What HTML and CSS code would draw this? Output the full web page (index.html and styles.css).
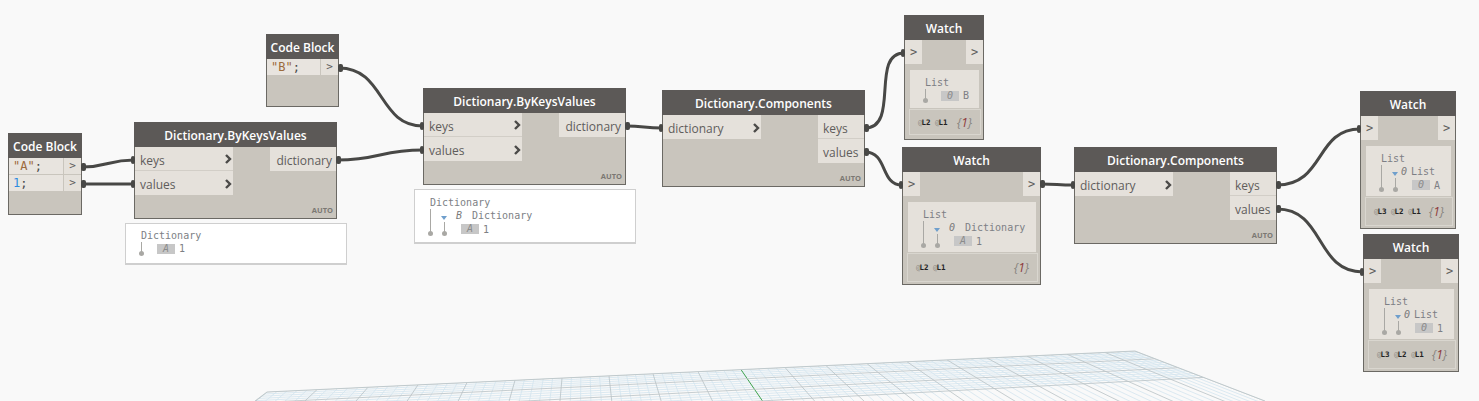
FILE: index.html
```html
<!DOCTYPE html>
<html lang="en">
<head>
    <meta charset="UTF-8">
    <title>Dynamo graph</title>
    <link rel="stylesheet" href="styles.css">
</head>
<body>
<div class="canvas">
    <svg class="grid" id="grid" width="1479" height="401"></svg>

    <!-- code blocks -->
    <div class="node code-a">
        <div class="node-head">Code Block</div>
        <div class="code-row">
            <span class="code-text"><span class="str">"A"</span>;</span>
            <span class="code-port">&gt;</span>
        </div>
        <div class="code-row">
            <span class="code-text"><span class="num">1</span>;</span>
            <span class="code-port">&gt;</span>
        </div>
    </div>

    <div class="node code-b">
        <div class="node-head">Code Block</div>
        <div class="code-row">
            <span class="code-text"><span class="str">"B"</span>;</span>
            <span class="code-port">&gt;</span>
        </div>
    </div>

    <!-- dictionary nodes -->
    <div class="node dict dict-a">
        <div class="node-head">Dictionary.ByKeysValues</div>
        <div class="node-body">
            <div class="ports">
                <div class="in">keys<svg class="chev" viewBox="0 0 8 10"><path d="M2 1l4 4-4 4"/></svg></div>
                <div class="in">values<svg class="chev" viewBox="0 0 8 10"><path d="M2 1l4 4-4 4"/></svg></div>
            </div>
            <div class="ports">
                <div class="out">dictionary</div>
            </div>
        </div>
        <div class="auto">AUTO</div>
    </div>

    <div class="preview prev-a">
        <div class="tree">
            <span class="guide"></span>
            <div class="row">Dictionary</div>
            <div class="row ind16"><span class="chip">A</span>1</div>
        </div>
    </div>

    <div class="node dict dict-b">
        <div class="node-head">Dictionary.ByKeysValues</div>
        <div class="node-body">
            <div class="ports">
                <div class="in">keys<svg class="chev" viewBox="0 0 8 10"><path d="M2 1l4 4-4 4"/></svg></div>
                <div class="in">values<svg class="chev" viewBox="0 0 8 10"><path d="M2 1l4 4-4 4"/></svg></div>
            </div>
            <div class="ports">
                <div class="out">dictionary</div>
            </div>
        </div>
        <div class="auto">AUTO</div>
    </div>

    <div class="preview prev-b">
        <div class="tree">
            <span class="guide long"></span>
            <span class="guide inner"></span>
            <div class="row">Dictionary</div>
            <div class="row ind26"><span class="idx">B</span>Dictionary</div>
            <div class="row ind31"><span class="chip">A</span>1</div>
        </div>
    </div>

    <div class="node dict comp-a">
        <div class="node-head">Dictionary.Components</div>
        <div class="node-body">
            <div class="ports">
                <div class="in">dictionary<svg class="chev" viewBox="0 0 8 10"><path d="M2 1l4 4-4 4"/></svg></div>
            </div>
            <div class="ports">
                <div class="out short">keys</div>
                <div class="out short">values</div>
            </div>
        </div>
        <div class="auto">AUTO</div>
    </div>

    <div class="node dict comp-b">
        <div class="node-head">Dictionary.Components</div>
        <div class="node-body">
            <div class="ports">
                <div class="in">dictionary<svg class="chev" viewBox="0 0 8 10"><path d="M2 1l4 4-4 4"/></svg></div>
            </div>
            <div class="ports">
                <div class="out short">keys</div>
                <div class="out short">values</div>
            </div>
        </div>
        <div class="auto">AUTO</div>
    </div>

    <!-- watch nodes -->
    <div class="node watch watch-a">
        <div class="node-head">Watch</div>
        <div class="watch-ports"><span>&gt;</span><span>&gt;</span></div>
        <div class="watch-view">
            <div class="tree">
                <span class="guide"></span>
                <div class="row">List</div>
                <div class="row ind16"><span class="chip">0</span>B</div>
            </div>
        </div>
        <div class="levels">
            <span><i>@</i><b>L2</b> <i>@</i><b>L1</b></span>
            <span class="count">{<em>1</em>}</span>
        </div>
    </div>

    <div class="node watch watch-b">
        <div class="node-head">Watch</div>
        <div class="watch-ports"><span>&gt;</span><span>&gt;</span></div>
        <div class="watch-view">
            <div class="tree">
                <span class="guide long"></span>
                <span class="guide inner"></span>
                <div class="row">List</div>
                <div class="row ind26"><span class="idx">0</span>Dictionary</div>
                <div class="row ind31"><span class="chip">A</span>1</div>
            </div>
        </div>
        <div class="levels">
            <span><i>@</i><b>L2</b> <i>@</i><b>L1</b></span>
            <span class="count">{<em>1</em>}</span>
        </div>
    </div>

    <div class="node watch watch-c">
        <div class="node-head">Watch</div>
        <div class="watch-ports"><span>&gt;</span><span>&gt;</span></div>
        <div class="watch-view">
            <div class="tree">
                <span class="guide long"></span>
                <span class="guide inner"></span>
                <div class="row">List</div>
                <div class="row ind20"><span class="idx tight">0</span>List</div>
                <div class="row ind31"><span class="chip">0</span>A</div>
            </div>
        </div>
        <div class="levels">
            <span><i>@</i><b>L3</b> <i>@</i><b>L2</b> <i>@</i><b>L1</b></span>
            <span class="count">{<em>1</em>}</span>
        </div>
    </div>

    <div class="node watch watch-d">
        <div class="node-head">Watch</div>
        <div class="watch-ports"><span>&gt;</span><span>&gt;</span></div>
        <div class="watch-view">
            <div class="tree">
                <span class="guide long"></span>
                <span class="guide inner"></span>
                <div class="row">List</div>
                <div class="row ind20"><span class="idx tight">0</span>List</div>
                <div class="row ind31"><span class="chip">0</span>1</div>
            </div>
        </div>
        <div class="levels">
            <span><i>@</i><b>L3</b> <i>@</i><b>L2</b> <i>@</i><b>L1</b></span>
            <span class="count">{<em>1</em>}</span>
        </div>
    </div>

    <!-- connectors -->
    <svg class="wires" width="1479" height="401">
        <g class="wire">
            <path d="M82 167C108 167 108 160 134 160"/>
            <path d="M82 184H134"/>
            <path d="M339 68C385 68 378 126 423 126"/>
            <path d="M337 160C380 160 380 150 423 150"/>
            <path d="M626 126C644 126 644 128 662 128"/>
            <path d="M865 128C900 128 870 53 904 53"/>
            <path d="M865 152C888 152 880 185 902 185"/>
            <path d="M1041 184C1057 184 1057 185 1074 185"/>
            <path d="M1277 185C1325 185 1315 129 1360 129"/>
            <path d="M1277 209C1325 209 1315 272 1363 272"/>
        </g>
        <g class="nub">
            <rect x="81" y="163" width="5" height="8" rx="2"/>
            <rect x="81" y="180" width="5" height="8" rx="2"/>
            <rect x="131" y="156" width="4" height="8" rx="2"/>
            <rect x="131" y="180" width="4" height="8" rx="2"/>
            <rect x="338" y="64" width="5" height="8" rx="2"/>
            <rect x="336" y="156" width="5" height="8" rx="2"/>
            <rect x="420" y="122" width="4" height="8" rx="2"/>
            <rect x="420" y="146" width="4" height="8" rx="2"/>
            <rect x="625" y="122" width="5" height="8" rx="2"/>
            <rect x="659" y="124" width="4" height="8" rx="2"/>
            <rect x="864" y="124" width="5" height="8" rx="2"/>
            <rect x="864" y="148" width="5" height="8" rx="2"/>
            <rect x="901" y="49" width="4" height="8" rx="2"/>
            <rect x="899" y="181" width="4" height="8" rx="2"/>
            <rect x="1040" y="180" width="5" height="8" rx="2"/>
            <rect x="1071" y="181" width="4" height="8" rx="2"/>
            <rect x="1276" y="181" width="5" height="8" rx="2"/>
            <rect x="1276" y="205" width="5" height="8" rx="2"/>
            <rect x="1357" y="125" width="4" height="8" rx="2"/>
            <rect x="1360" y="268" width="4" height="8" rx="2"/>
        </g>
    </svg>
</div>
<script src="grid.js"></script>
</body>
</html>
```

FILE: styles.css
```css
:root {
    --bg: #f9f9f9;
    --head: #5c5957;
    --body: #c9c5bd;
    --edge: #6b6964;
    --row: #e5e1db;
    --text: #5f5d5b;
    --mono: 'DejaVu Sans Mono', monospace;
}

* {
    box-sizing: border-box;
}

body {
    margin: 0;
    background-color: var(--bg);
    overflow: hidden;
}

.canvas {
    position: relative;
    width: 1479px;
    height: 401px;
    font-family: 'Open Sans', sans-serif;
    color: var(--text);
}

.grid, .wires {
    position: absolute;
    left: 0;
    top: 0;
}

.wires {
    pointer-events: none;
}

.wire path {
    fill: none;
    stroke: #484846;
    stroke-width: 3;
}

.nub rect {
    fill: #484846;
}

/* nodes */
.node {
    position: absolute;
    display: flex;
    flex-direction: column;
    background-color: var(--body);
    border: 1px solid var(--edge);
}

.node-head {
    flex: none;
    height: 23px;
    margin: -1px -1px 0;
    padding-top: 2px;
    box-sizing: content-box;
    background-color: var(--head);
    color: #fff;
    font-size: 12px;
    font-weight: 600;
    line-height: 24px;
    text-align: center;
}

.code-a { left: 8px; top: 133px; width: 74px; height: 82px; }
.code-b { left: 266px; top: 34px; width: 73px; height: 73px; }
.dict-a { left: 134px; top: 122px; width: 203px; height: 97px; }
.dict-b { left: 423px; top: 88px; width: 203px; height: 97px; }
.comp-a { left: 662px; top: 90px; width: 203px; height: 97px; }
.comp-b { left: 1074px; top: 147px; width: 203px; height: 97px; }
.watch-a { left: 904px; top: 15px; width: 80px; height: 125px; }
.watch-b { left: 902px; top: 147px; width: 139px; height: 138px; }
.watch-c { left: 1360px; top: 91px; width: 96px; height: 138px; }
.watch-d { left: 1363px; top: 234px; width: 96px; height: 138px; }

/* code block rows */
.code-row {
    display: flex;
    height: 17px;
    border-bottom: 1px solid var(--body);
}

.code-text {
    flex: 1;
    padding-left: 4px;
    background-color: #e8e4df;
    color: #4a4a4a;
    font-family: var(--mono);
    font-size: 12px;
    line-height: 16px;
}

.str { color: #9c6a3c; }
.num { color: #2f8be0; }

.code-port {
    flex: none;
    width: 17px;
    margin-left: 1px;
    background-color: var(--row);
    font-family: var(--mono);
    font-size: 11px;
    line-height: 16px;
    text-align: center;
}

/* dictionary node rows */
.node-body {
    display: flex;
    justify-content: space-between;
}

.ports {
    display: flex;
    flex-direction: column;
    align-items: flex-end;
}

.in, .out {
    height: 24px;
    border-bottom: 1px solid #d2cec7;
    background-color: var(--row);
    font-size: 12px;
    line-height: 28px;
}

.in:last-child, .out:last-child {
    border-bottom: 0;
}

.in {
    display: flex;
    justify-content: space-between;
    align-items: center;
    width: 98px;
    padding: 4px 1px 0 5px;
}

.out {
    width: 66px;
    padding-right: 4px;
    text-align: right;
}

.out.short {
    width: 46px;
    padding-right: 0;
    padding-left: 5px;
    text-align: left;
}

.chev {
    width: 8px;
    height: 10px;
    margin-top: -3px;
}

.chev path {
    fill: none;
    stroke: #4b4a48;
    stroke-width: 2.4;
}

.auto {
    margin-top: auto;
    padding: 0 3px 3px 0;
    color: #7b7873;
    font-size: 7.5px;
    font-weight: 700;
    line-height: 10px;
    text-align: right;
}

/* previews */
.preview {
    position: absolute;
    background-color: #fff;
    border: 1px solid #cfcfcf;
    border-bottom-width: 2px;
}

.prev-a { left: 125px; top: 223px; width: 222px; height: 42px; padding: 5px 0 0 15px; }
.prev-b { left: 414px; top: 189px; width: 222px; height: 55px; padding: 6px 0 0 15px; }

.tree {
    position: relative;
    font-family: var(--mono);
    font-size: 10px;
    color: #7d7f85;
}

.row {
    display: flex;
    align-items: center;
    height: 13.3px;
    white-space: pre;
}

.ind16 { margin-left: 16px; }
.ind20 { margin-left: 20px; }
.ind26 { margin-left: 26px; }
.ind31 { margin-left: 31px; }

.chip {
    width: 18px;
    height: 10px;
    margin-right: 4px;
    background-color: #c7c7c7;
    color: #8b8b8b;
    font-style: italic;
    line-height: 10px;
    text-align: center;
}

.idx {
    width: 16px;
    color: #7a7a7a;
    font-style: italic;
}

.idx.tight {
    width: 10px;
}

.guide {
    position: absolute;
    left: 0;
    top: 13px;
    width: 1px;
    height: 12px;
    background-color: #a9a8a4;
}

.guide::after {
    content: '';
    position: absolute;
    left: -2px;
    bottom: -2px;
    width: 5px;
    height: 5px;
    border-radius: 50%;
    background-color: #a9a8a4;
}

.guide.long {
    height: 25px;
}

.guide.inner {
    left: 14px;
    top: 26px;
    height: 12px;
}

.guide.inner::before {
    content: '';
    position: absolute;
    left: -3px;
    top: -6px;
    border-style: solid;
    border-width: 4px 3.5px 0;
    border-color: #6f9fcc transparent transparent;
}

/* watch nodes */
.watch-ports {
    display: flex;
    justify-content: space-between;
    flex: none;
    font-family: var(--mono);
    font-size: 12px;
    line-height: 24px;
    text-align: center;
}

.watch-ports span {
    width: 17px;
    height: 24px;
    background-color: var(--row);
}

.watch-view {
    flex: 1;
    margin: 6px 4px 1px 5px;
    padding: 6px 0 0 15px;
    background-color: var(--row);
}

.levels {
    display: flex;
    flex: none;
    justify-content: space-between;
    align-items: center;
    height: 29px;
    margin: 0 2px 2px 4px;
    padding: 0 8px;
    border: 1px solid #d9d6cf;
    font-family: var(--mono);
    font-size: 7.5px;
}

.watch-a .levels {
    height: 26px;
    margin-bottom: 4px;
}

.levels i {
    color: #8d8a85;
    font-style: normal;
    font-weight: 400;
}

.levels b {
    color: #222;
    margin-left: -1px;
}

.count {
    color: #87847e;
    font-family: 'Open Sans', sans-serif;
    font-size: 12px;
    font-style: italic;
}

.count em {
    color: #8e3a3a;
}
```

FILE: grid.js
```js
// ground grid seen in perspective, only the far part of it shows at the bottom
const NS = 'http://www.w3.org/2000/svg';
const svg = document.getElementById('grid');

const vanishDepth = [583, 139];
const vanishCross = [6000, 122];

const farXs = [267, 317, 368, 418, 467, 515, 562, 609, 653, 698, 741,
    785, 826, 867, 907, 947, 987, 1027, 1067, 1105, 1135];
const crossYs = [369.5, 379, 390, 402];

function farY(x) {
    return 351 + (1135 - x) * 0.0472;
}

function addLine(x1, y1, x2, y2, color, width) {
    const line = document.createElementNS(NS, 'line');
    line.setAttribute('x1', x1);
    line.setAttribute('y1', y1);
    line.setAttribute('x2', x2);
    line.setAttribute('y2', y2);
    line.setAttribute('stroke', color);
    line.setAttribute('stroke-width', width);
    group.appendChild(line);
}

function depthLine(x, color, width) {
    const y = farY(x);
    const t = (420 - y) / (y - vanishDepth[1]);
    addLine(x, y, x + (x - vanishDepth[0]) * t, 420, color, width);
}

function crossLine(y, color, width) {
    const slope = (y - vanishCross[1]) / (741 - vanishCross[0]);
    addLine(200, y + (200 - 741) * slope, 1300, y + (1300 - 741) * slope, color, width);
}

const defs = document.createElementNS(NS, 'defs');
const clip = document.createElementNS(NS, 'clipPath');
clip.setAttribute('id', 'gridClip');
const shape = document.createElementNS(NS, 'polygon');
shape.setAttribute('points', '267,392 1135,351 1265,401 255,401');
clip.appendChild(shape);
defs.appendChild(clip);
svg.appendChild(defs);

const group = document.createElementNS(NS, 'g');
group.setAttribute('clip-path', 'url(#gridClip)');
svg.appendChild(group);

const MINOR = '#d3e4ef';
const MAJOR = '#b7c1c5';

for (let i = 0; i < farXs.length - 1; i++) {
    for (let j = 1; j < 5; j++) {
        depthLine(farXs[i] + (farXs[i + 1] - farXs[i]) * j / 5, MINOR, 0.8);
    }
}
for (let i = 0; i < crossYs.length - 1; i++) {
    for (let j = 1; j < 5; j++) {
        crossLine(crossYs[i] + (crossYs[i + 1] - crossYs[i]) * j / 5, MINOR, 0.8);
    }
}
farXs.forEach(x => depthLine(x, x === 741 ? '#3fa34d' : MAJOR, x === 741 ? 1 : 0.8));
crossYs.forEach(y => crossLine(y, MAJOR, 0.8));

// outline of the plane
const edge = document.createElementNS(NS, 'polyline');
edge.setAttribute('points', '255,401 267,392 1135,351 1265,401');
edge.setAttribute('fill', 'none');
edge.setAttribute('stroke', '#c0cacd');
edge.setAttribute('stroke-width', 1);
svg.appendChild(edge);
```
